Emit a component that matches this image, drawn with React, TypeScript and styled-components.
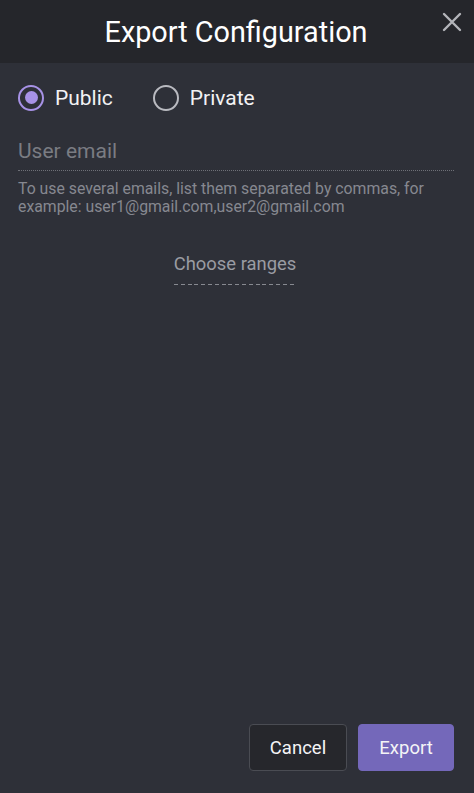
import React, { useState } from "react";
import styled, { createGlobalStyle } from "styled-components";

const GlobalStyle = createGlobalStyle`
  html, body {
    margin: 0;
    padding: 0;
    background: #2e3038;
    font-family: Roboto, "Noto Sans", sans-serif;
  }
  * { box-sizing: border-box; }
`;

const Dialog = styled.div`
  width: 474px;
  height: 793px;
  display: flex;
  flex-direction: column;
  background: #2e3038;
  overflow: hidden;
`;

const Header = styled.div`
  position: relative;
  height: 63px;
  flex-shrink: 0;
  display: flex;
  align-items: center;
  justify-content: center;
  background: #25262b;
`;

const Title = styled.h1`
  margin: 0 0 0 -2px;
  font-size: 28.8px;
  font-weight: 400;
  color: #ffffff;
`;

const CloseButton = styled.button`
  position: absolute;
  top: 10px;
  right: 10px;
  width: 24px;
  height: 24px;
  padding: 0;
  border: none;
  background: transparent;
  cursor: pointer;
  display: flex;
  align-items: center;
  justify-content: center;
`;

const Body = styled.div`
  flex: 1;
  display: flex;
  flex-direction: column;
  padding: 20px 20px 0 18px;
`;

const RadioGroup = styled.div`
  display: flex;
  align-items: center;
  gap: 40px;
  height: 29px;
`;

const RadioLabel = styled.label`
  display: flex;
  align-items: center;
  gap: 11px;
  font-size: 21px;
  color: #f2f2f4;
  cursor: pointer;
`;

const RadioCircle = styled.span<{ $checked: boolean }>`
  width: 26px;
  height: 26px;
  border-radius: 50%;
  border: 2.5px solid ${(p) => (p.$checked ? "#a792e6" : "#b9bac0")};
  display: flex;
  align-items: center;
  justify-content: center;

  &::after {
    content: "";
    width: 13px;
    height: 13px;
    border-radius: 50%;
    background: ${(p) => (p.$checked ? "#a792e6" : "transparent")};
  }
`;

const EmailField = styled.div`
  margin-top: 24px;
  display: flex;
  flex-direction: column;
`;

const EmailInput = styled.input`
  width: 100%;
  height: 35px;
  padding: 0 0 4px 0;
  border: none;
  border-bottom: 1.5px dotted #6e7077;
  background: transparent;
  font-family: inherit;
  font-size: 21px;
  color: #e5e5e8;
  outline: none;

  &::placeholder {
    color: #7a7c83;
  }
`;

const Helper = styled.p`
  margin: 9px 0 0;
  font-size: 15.8px;
  line-height: 18px;
  color: #868890;
`;

const RangesLink = styled.button`
  align-self: center;
  margin: 37px 0 0 -2px;
  padding: 0 0 11px;
  border: none;
  background: transparent
    repeating-linear-gradient(to right, #878990 0 4px, transparent 4px 6.8px)
    left bottom / 100% 1.5px no-repeat;
  font-family: inherit;
  font-size: 18.4px;
  color: #9a9ca3;
  cursor: pointer;
`;

const Footer = styled.div`
  display: flex;
  justify-content: flex-end;
  gap: 11px;
  padding: 0 20px 22px;
`;

const Button = styled.button<{ $primary?: boolean }>`
  height: 47px;
  width: ${(p) => (p.$primary ? "96px" : "98px")};
  padding: 0;
  border-radius: 4px;
  border: 1px solid ${(p) => (p.$primary ? "#7468ba" : "#4a4c53")};
  background: ${(p) => (p.$primary ? "#7468ba" : "#26272c")};
  color: #f4f4f6;
  font-family: inherit;
  font-size: 18.5px;
  cursor: pointer;
`;

export default function App() {
  const [mode, setMode] = useState<"public" | "private">("public");

  return (
    <>
      <GlobalStyle />
      <Dialog>
        <Header>
          <Title>Export Configuration</Title>
          <CloseButton aria-label="Close">
            <svg width="20" height="20" viewBox="0 0 20 20">
              <path d="M2 2L18 18M18 2L2 18" stroke="#b4b5ba" strokeWidth="2.4" strokeLinecap="round" />
            </svg>
          </CloseButton>
        </Header>
        <Body>
          <RadioGroup>
            <RadioLabel onClick={() => setMode("public")}>
              <RadioCircle $checked={mode === "public"} />
              Public
            </RadioLabel>
            <RadioLabel onClick={() => setMode("private")}>
              <RadioCircle $checked={mode === "private"} />
              Private
            </RadioLabel>
          </RadioGroup>
          <EmailField>
            <EmailInput placeholder="User email" />
            <Helper>
              To use several emails, list them separated by commas, for example: user1@gmail.com,user2@gmail.com
            </Helper>
          </EmailField>
          <RangesLink>Choose ranges</RangesLink>
        </Body>
        <Footer>
          <Button>Cancel</Button>
          <Button $primary>Export</Button>
        </Footer>
      </Dialog>
    </>
  );
}
